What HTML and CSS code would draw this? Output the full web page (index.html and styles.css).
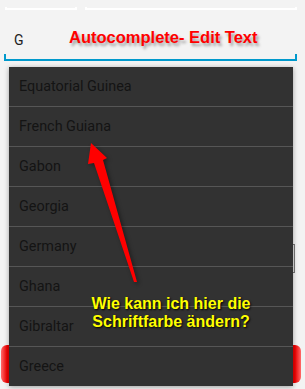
FILE: index.html
```html
<!DOCTYPE html>
<html lang="en">
<head>
    <meta charset="UTF-8">
    <meta name="viewport" content="width=device-width, initial-scale=1.0">
    <title>Autocomplete</title>
    <link rel="stylesheet" href="styles.css">
</head>
<body>
    <div class="top-row">
        <div class="field field-short"></div>
        <div class="field field-long"></div>
    </div>

    <div class="edit">G</div>

    <div class="highlight"></div>
    <div class="scroll-track"></div>

    <ul class="dropdown">
        <li>Equatorial Guinea</li>
        <li>French Guiana</li>
        <li>Gabon</li>
        <li>Georgia</li>
        <li>Germany</li>
        <li>Ghana</li>
        <li>Gibraltar</li>
        <li>Greece</li>
    </ul>

    <!-- annotations -->
    <div class="label">Autocomplete- Edit Text</div>

    <svg class="arrow" width="305" height="389" viewBox="0 0 305 389">
        <polygon points="91,143 107,158 103,160 137,282 134,282 94,163 88,164" fill="#ff0000"/>
    </svg>

    <div class="question">Wie kann ich hier die<br>Schriftfarbe ändern?</div>
</body>
</html>
```

FILE: styles.css
```css
* {
    margin: 0;
    padding: 0;
    box-sizing: border-box;
}

body {
    width: 305px;
    height: 389px;
    overflow: hidden;
    background: #f3f3f3;
    font-family: Roboto, "Noto Sans", sans-serif;
    position: relative;
}

.top-row {
    display: flex;
    gap: 8px;
    padding: 7px 8px 0 5px;
}

.field {
    height: 3px;
    border: 2px solid #fff;
    border-top: none;
}

.field-short {
    width: 72px;
}

.field-long {
    flex-grow: 1;
}

.edit {
    position: relative;
    margin: 0 8px 0 4px;
    height: 51px;
    padding: 22px 0 0 10px;
    font-size: 14px;
    line-height: 16px;
    color: #222;
}

.edit::after {
    content: "";
    position: absolute;
    left: 0;
    right: 0;
    bottom: 0;
    height: 5px;
    border: 2px solid #0099cc;
    border-top: none;
}

.dropdown {
    position: relative;
    list-style: none;
    margin: 6px 0 0 9px;
    width: 284px;
    background: #323232;
    box-shadow: 0 1px 5px rgba(0,0,0,0.35);
}

.dropdown li {
    height: 40px;
    line-height: 40px;
    padding-left: 10px;
    border-top: 1px solid #565656;
    font-size: 14.4px;
    color: #141414;
}

.dropdown li:first-child {
    height: 39px;
    border-top: none;
}

.highlight {
    position: absolute;
    left: 1px;
    top: 345px;
    width: 300px;
    height: 38px;
    border-radius: 6px;
    background: linear-gradient(to right, #ff6a6a 0%, #ee0000 2%, #ee0000 98%, #ff6a6a 100%);
}

.scroll-track {
    position: absolute;
    left: 288px;
    top: 244px;
    width: 7px;
    height: 29px;
    border: 1px solid #777;
    background: #e6e6e6;
}

.label {
    position: absolute;
    left: 69px;
    top: 29px;
    font-family: "Liberation Sans", Arial, sans-serif;
    font-weight: bold;
    font-size: 16.5px;
    line-height: 1;
    color: #ff0000;
    text-shadow: 2px 3px 3px rgba(0,0,0,0.35);
}

.arrow {
    position: absolute;
    left: 0;
    top: 0;
    filter: drop-shadow(2px 2px 2px rgba(0,0,0,0.4));
}

.question {
    position: absolute;
    left: 76px;
    top: 295px;
    width: 190px;
    text-align: center;
    font-family: "Liberation Sans", Arial, sans-serif;
    font-weight: bold;
    font-size: 16px;
    line-height: 18px;
    color: #ffff00;
    text-shadow: 1px 1px 2px #000;
}
```
